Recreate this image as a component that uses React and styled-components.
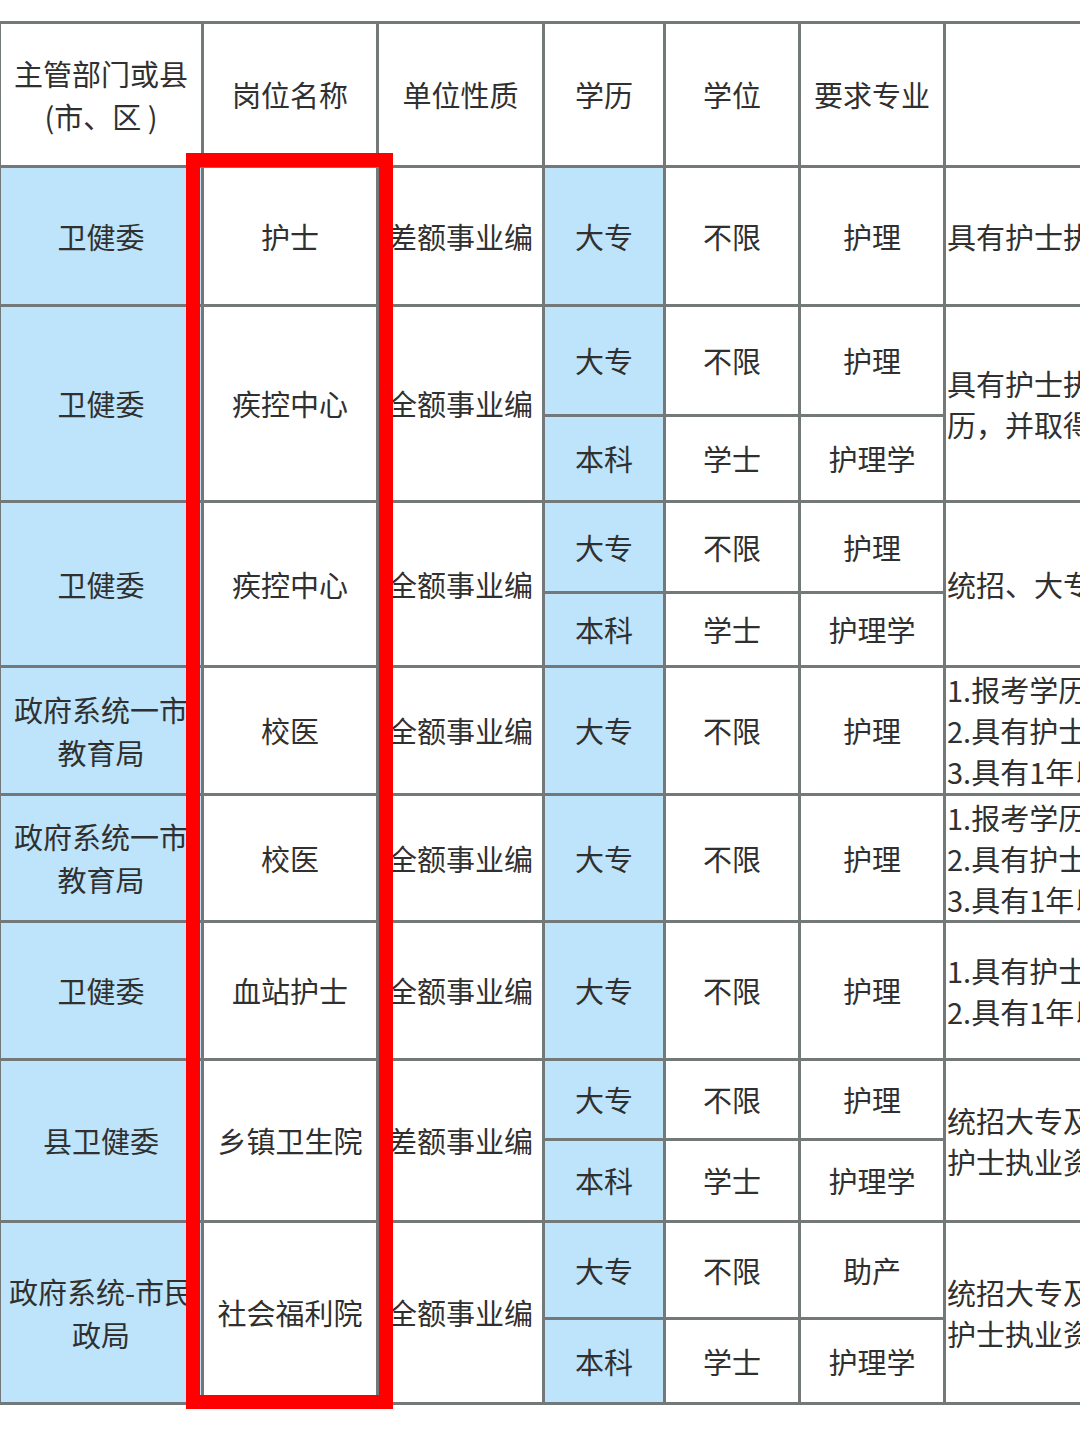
import styled, { createGlobalStyle } from "styled-components";

const GlobalStyle = createGlobalStyle`
  html, body {
    margin: 0;
    padding: 0;
    background: #ffffff;
    overflow: hidden;
  }
`;

const Page = styled.div`
  position: relative;
  width: 1080px;
  height: 1440px;
  overflow: hidden;
  background: #ffffff;
  font-family: "Noto Sans CJK SC", "Noto Sans", sans-serif;
  color: #303030;
`;

const Grid = styled.div`
  display: grid;
  grid-template-columns: 200px 172px 163px 118px 132px 142px 520px;
  grid-template-rows: 141px 136px 107px 83px 88px 71px 125px 124px 135px 77px 79px 94px 82px;
  gap: 3px;
  padding: 3px;
  margin: 21px 0 0 -2px;
  width: max-content;
  background: #737979;
`;

const Cell = styled.div`
  grid-row: span ${(p) => p.$span || 1};
  background: ${(p) => (p.$blue ? "#bde4fa" : "#ffffff")};
  display: flex;
  flex-direction: column;
  justify-content: center;
  align-items: ${(p) => (p.$left ? "flex-start" : "center")};
  padding-left: ${(p) => (p.$left ? "1px" : "0")};
  font-size: 29px;
  line-height: ${(p) => (p.$tight ? "41px" : "43px")};
  white-space: nowrap;
  overflow: visible;
  text-align: center;
`;

const Line = styled.span`
  display: block;
`;

const Highlight = styled.div`
  position: absolute;
  left: 186px;
  top: 153px;
  width: 207px;
  height: 1256px;
  border: 14px solid #ff0000;
  box-sizing: border-box;
  pointer-events: none;
`;

const header = [
  ["主管部门或县", "(市、区 )"],
  ["岗位名称"],
  ["单位性质"],
  ["学历"],
  ["学位"],
  ["要求专业"],
  [""],
];

const groups = [
  {
    dept: ["卫健委"],
    post: "护士",
    kind: "差额事业编",
    subs: [["大专", "不限", "护理"]],
    note: ["具有护士执业资格证书"],
  },
  {
    dept: ["卫健委"],
    post: "疾控中心",
    kind: "全额事业编",
    subs: [
      ["大专", "不限", "护理"],
      ["本科", "学士", "护理学"],
    ],
    note: ["具有护士执业资格证，大专及以上学", "历，并取得护士执业证书"],
  },
  {
    dept: ["卫健委"],
    post: "疾控中心",
    kind: "全额事业编",
    subs: [
      ["大专", "不限", "护理"],
      ["本科", "学士", "护理学"],
    ],
    note: ["统招、大专及以上学历"],
  },
  {
    dept: ["政府系统一市", "教育局"],
    post: "校医",
    kind: "全额事业编",
    subs: [["大专", "不限", "护理"]],
    note: ["1.报考学历为统招大专及以上", "2.具有护士执业资格证", "3.具有1年以上工作经验"],
  },
  {
    dept: ["政府系统一市", "教育局"],
    post: "校医",
    kind: "全额事业编",
    subs: [["大专", "不限", "护理"]],
    note: ["1.报考学历为统招大专及以上", "2.具有护士执业资格证", "3.具有1年以上工作经验"],
  },
  {
    dept: ["卫健委"],
    post: "血站护士",
    kind: "全额事业编",
    subs: [["大专", "不限", "护理"]],
    note: ["1.具有护士执业资格证", "2.具有1年以上工作经验"],
  },
  {
    dept: ["县卫健委"],
    post: "乡镇卫生院",
    kind: "差额事业编",
    subs: [
      ["大专", "不限", "护理"],
      ["本科", "学士", "护理学"],
    ],
    note: ["统招大专及以上学历，具有", "护士执业资格证"],
  },
  {
    dept: ["政府系统-市民", "政局"],
    post: "社会福利院",
    kind: "全额事业编",
    subs: [
      ["大专", "不限", "助产"],
      ["本科", "学士", "护理学"],
    ],
    note: ["统招大专及以上学历，具有", "护士执业资格证"],
  },
];

function Lines({ items }) {
  return items.map((t, i) => <Line key={i}>{t}</Line>);
}

export default function App() {
  return (
    <Page>
      <GlobalStyle />
      <Grid>
        {header.map((h, i) => (
          <Cell key={"h" + i}>
            <Lines items={h} />
          </Cell>
        ))}
        {groups.map((g, gi) => {
          const span = g.subs.length;
          const [first, ...rest] = g.subs;
          return [
            <Cell key={gi + "d"} $span={span} $blue>
              <Lines items={g.dept} />
            </Cell>,
            <Cell key={gi + "p"} $span={span}>
              {g.post}
            </Cell>,
            <Cell key={gi + "k"} $span={span}>
              {g.kind}
            </Cell>,
            <Cell key={gi + "e"} $blue>
              {first[0]}
            </Cell>,
            <Cell key={gi + "x"}>{first[1]}</Cell>,
            <Cell key={gi + "m"}>{first[2]}</Cell>,
            <Cell key={gi + "n"} $span={span} $left $tight>
              <Lines items={g.note} />
            </Cell>,
            ...rest.flatMap((s, si) => [
              <Cell key={gi + "e" + si} $blue>
                {s[0]}
              </Cell>,
              <Cell key={gi + "x" + si}>{s[1]}</Cell>,
              <Cell key={gi + "m" + si}>{s[2]}</Cell>,
            ]),
          ];
        })}
      </Grid>
      <Highlight />
    </Page>
  );
}
